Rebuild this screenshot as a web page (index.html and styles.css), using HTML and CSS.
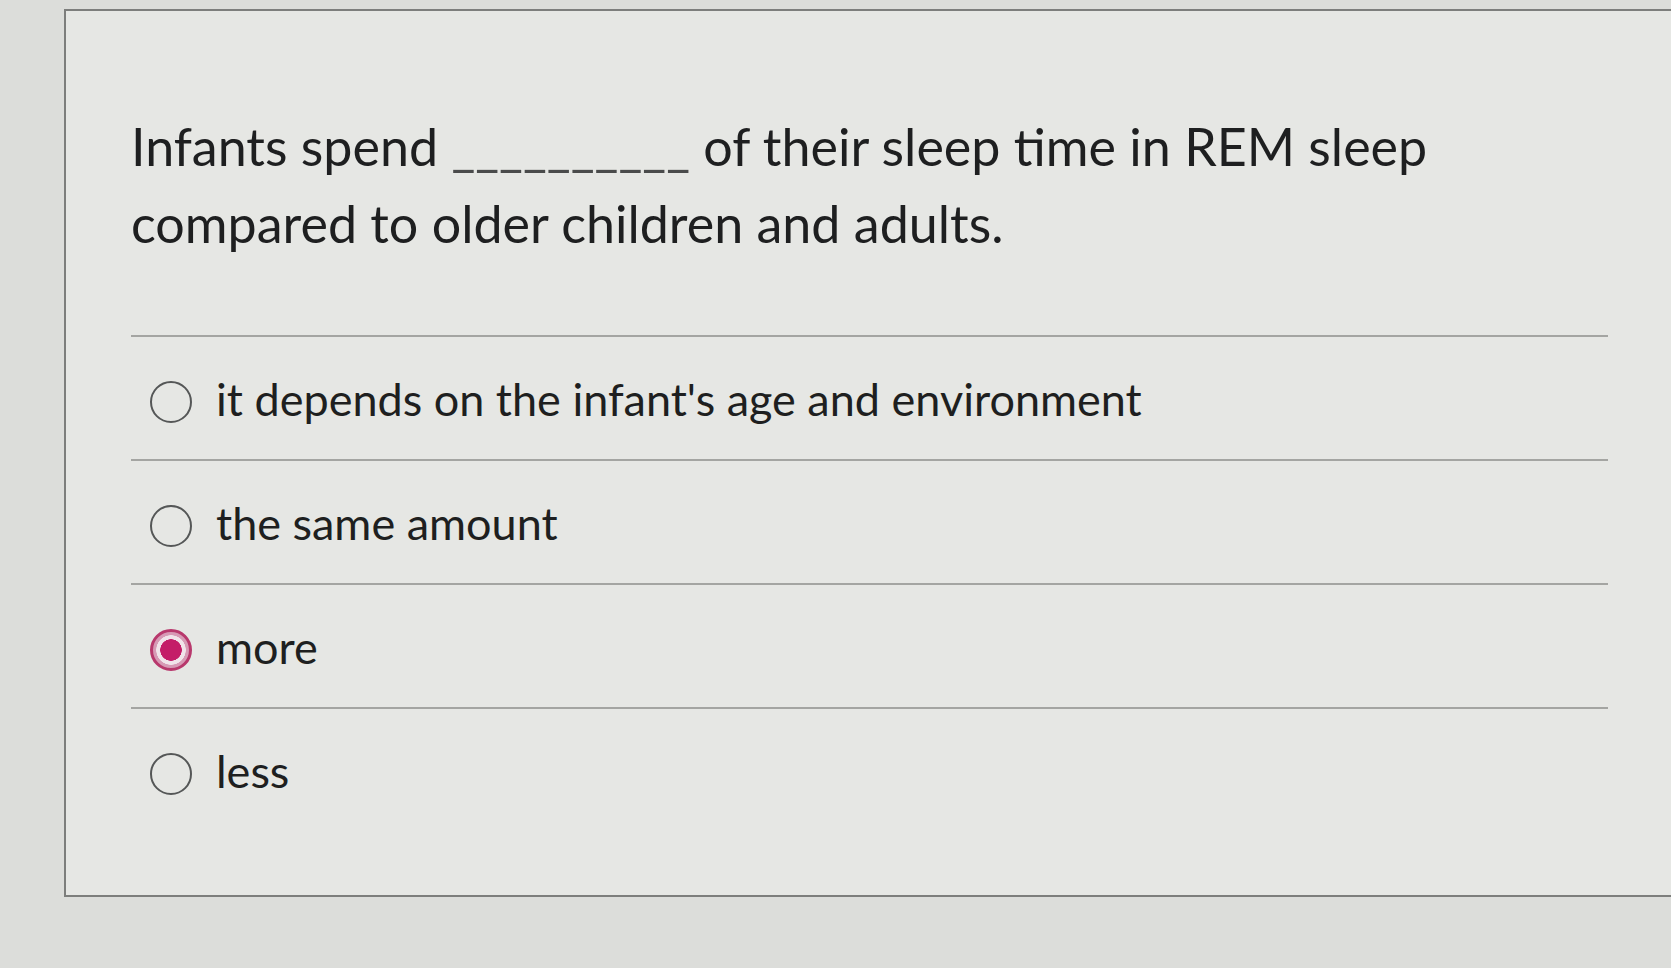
FILE: index.html
```html
<!DOCTYPE html>
<html lang="en">
<head>
<meta charset="utf-8">
<title>Quiz question</title>
<link rel="stylesheet" href="styles.css">
</head>
<body>
<div class="page">
  <div class="card">
    <div class="question">Infants spend <span class="blank">__________</span> of their sleep time in REM sleep compared to older children and adults.</div>
    <div class="answers">
      <div class="answer"><span class="radio"></span><span class="label">it depends on the infant's age and environment</span></div>
      <div class="answer"><span class="radio"></span><span class="label">the same amount</span></div>
      <div class="answer"><span class="radio checked"></span><span class="label">more</span></div>
      <div class="answer"><span class="radio"></span><span class="label">less</span></div>
    </div>
  </div>
</div>
</body>
</html>
```
FILE: styles.css
```css
html, body {
  margin: 0;
  padding: 0;
}
body {
  background: #dcddda;
  font-family: Lato, "Noto Sans", sans-serif;
  color: #1e1f20;
  overflow: hidden;
}
.page {
  width: 1671px;
  height: 968px;
  padding: 9px 0 0 64px;
  box-sizing: border-box;
}
.card {
  background: #e6e7e4;
  border: 2px solid #7d7e7c;
  border-right: none;
  height: 888px;
  box-sizing: border-box;
  padding: 97px 0 0 65px;
}
.question {
  width: 1400px;
  font-size: 52px;
  line-height: 77px;
}
.blank {
  color: #4a4b4b;
}
.answers {
  margin-top: 73px;
  width: 1477px;
}
.answer {
  border-top: 2px solid #a4a5a2;
  min-height: 124px;
  box-sizing: border-box;
  padding: 8px 0 0 19px;
  display: flex;
  align-items: center;
  gap: 24px;
}
.radio {
  width: 42px;
  height: 42px;
  box-sizing: border-box;
  border: 2.5px solid #555757;
  border-radius: 50%;
  flex: none;
}
.radio.checked {
  border: 3px solid #b8386c;
  background: radial-gradient(circle, #c41d68 0 10.5px, #f1e4ea 11px 14.5px, #d79ab5 15px);
}
.label {
  font-size: 45px;
  line-height: 56px;
  margin-top: -6px;
}
```
